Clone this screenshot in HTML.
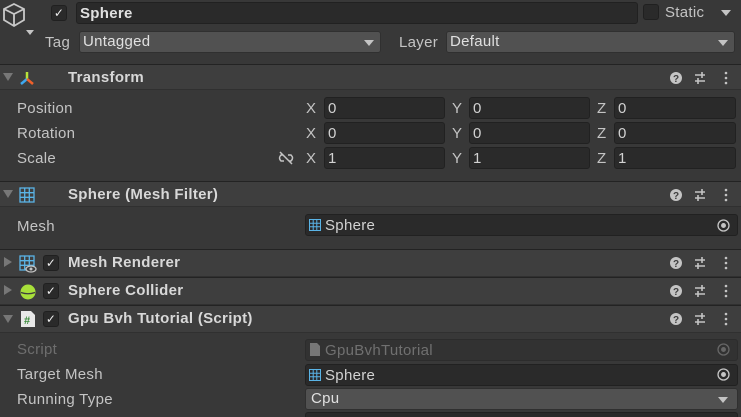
<!DOCTYPE html>
<html style="overflow:hidden;height:417px"><head><style>
*{box-sizing:border-box;margin:0;padding:0}
body{width:741px;height:417px;background:#383838;font-family:"Liberation Sans",sans-serif;font-size:15px;letter-spacing:0.3px;color:#c4c4c4;position:relative;overflow:hidden}
.a{position:absolute}
.f{position:absolute;background:#2a2a2a;border:1px solid #212121;border-radius:3px;height:22px;line-height:21px;padding-left:3px;color:#d2d2d2}
.dd{position:absolute;background:#515151;border:1px solid #303030;border-radius:3px;height:22px;line-height:20px;padding-left:3px;color:#e0e0e0}
.cb{position:absolute;width:16px;height:16px;background:#2a2a2a;border:1px solid #202020;border-radius:3px;color:#eee;font-size:12px;line-height:14px;text-align:center}
.hd{position:absolute;left:0;width:741px;height:26px;background:#3e3e3e;border-top:1px solid #232323;border-bottom:1px solid #303030}
.hd b{position:absolute;left:68px;top:4px;font-size:15px;color:#d8d8d8}
.tri{position:absolute;left:3px;top:8px;width:0;height:0;border-left:5px solid transparent;border-right:5px solid transparent;border-top:8px solid #777}
.tr{position:absolute;left:4px;top:7px;width:0;height:0;border-top:5px solid transparent;border-bottom:5px solid transparent;border-left:8px solid #777}
.ic{position:absolute;top:5px;right:0;width:80px;height:16px}
.lbl{position:absolute;left:17px}
.arr{position:absolute;width:0;height:0;border-left:5px solid transparent;border-right:5px solid transparent;border-top:6px solid #c4c4c4}
</style></head><body>
<svg class="a" style="left:2px;top:2px" width="26" height="28" viewBox="0 0 26 28" fill="none" stroke="#c8c8c8" stroke-width="1.8"><path d="M12 2 L22 7 L22 18 L12 24 L2 18 L2 7 Z M2 7 L12 12 L22 7 M12 12 L12 24"/></svg>
<div class="arr" style="left:26px;top:30px;border-top-color:#c4c4c4;border-left-width:4px;border-right-width:4px;border-top-width:5px"></div>
<div class="cb" style="left:51px;top:5px">✓</div>
<div class="f" style="left:76px;top:2px;width:562px;font-weight:bold;color:#e0e0e0">Sphere</div>
<div class="cb" style="left:643px;top:4px"></div>
<div class="a" style="left:665px;top:4px">Static</div>
<div class="arr" style="left:721px;top:10px"></div>
<div class="a" style="left:45px;top:34px">Tag</div>
<div class="dd" style="left:79px;top:31px;width:302px">Untagged</div>
<div class="arr" style="left:364px;top:40px"></div>
<div class="a" style="left:399px;top:34px">Layer</div>
<div class="dd" style="left:446px;top:31px;width:289px">Default</div>
<div class="arr" style="left:718px;top:40px"></div>

<div class="hd" style="top:64px"><div class="tri"></div>
<svg class="a" style="left:19px;top:5px" width="16" height="16"><line x1="8" y1="2" x2="8" y2="9" stroke="#b8e23a" stroke-width="2.5"/><line x1="8" y1="9" x2="2" y2="14" stroke="#3ea8f0" stroke-width="2.5"/><line x1="8" y1="9" x2="14" y2="14" stroke="#f0602a" stroke-width="2.5"/></svg>
<b>Transform</b>
<svg class="ic" viewBox="0 0 80 16"><circle cx="15" cy="8" r="6" fill="#c4c4c4"/><text x="12" y="12" font-size="10" font-weight="bold" fill="#3e3e3e" font-family="Liberation Sans">?</text><path d="M34 5h10M34 11h10M41 2v6M37 8v6" stroke="#c4c4c4" stroke-width="1.6"/><circle cx="65" cy="3" r="1.3" fill="#c4c4c4"/><circle cx="65" cy="8" r="1.3" fill="#c4c4c4"/><circle cx="65" cy="13" r="1.3" fill="#c4c4c4"/></svg></div>

<div class="lbl" style="top:100px">Position</div>
<div class="lbl" style="top:125px">Rotation</div>
<div class="lbl" style="top:150px">Scale</div>
<svg class="a" style="left:278px;top:151px" width="16" height="14" fill="none" stroke="#c4c4c4" stroke-width="1.5"><path d="M5 4 L3 4 Q0 7 3 10 L6 10 M10 4 L13 4 Q16 7 13 10 L11 10 M2 1 L14 13"/></svg>
<div class="a" style="left:306px;top:100px">X</div><div class="f" style="left:324px;top:97px;width:121px">0</div>
<div class="a" style="left:452px;top:100px">Y</div><div class="f" style="left:469px;top:97px;width:121px">0</div>
<div class="a" style="left:597px;top:100px">Z</div><div class="f" style="left:614px;top:97px;width:122px">0</div>
<div class="a" style="left:306px;top:125px">X</div><div class="f" style="left:324px;top:122px;width:121px">0</div>
<div class="a" style="left:452px;top:125px">Y</div><div class="f" style="left:469px;top:122px;width:121px">0</div>
<div class="a" style="left:597px;top:125px">Z</div><div class="f" style="left:614px;top:122px;width:122px">0</div>
<div class="a" style="left:306px;top:150px">X</div><div class="f" style="left:324px;top:147px;width:121px">1</div>
<div class="a" style="left:452px;top:150px">Y</div><div class="f" style="left:469px;top:147px;width:121px">1</div>
<div class="a" style="left:597px;top:150px">Z</div><div class="f" style="left:614px;top:147px;width:122px">1</div>

<div class="hd" style="top:181px"><div class="tri"></div>
<svg class="a" style="left:19px;top:5px" width="16" height="16" fill="none" stroke="#5ab4e6" stroke-width="1.3"><rect x="1" y="1" width="14" height="14"/><path d="M5.7 1v14M10.3 1v14M1 5.7h14M1 10.3h14"/></svg>
<b>Sphere (Mesh Filter)</b>
<svg class="ic" viewBox="0 0 80 16"><circle cx="15" cy="8" r="6" fill="#c4c4c4"/><text x="12" y="12" font-size="10" font-weight="bold" fill="#3e3e3e" font-family="Liberation Sans">?</text><path d="M34 5h10M34 11h10M41 2v6M37 8v6" stroke="#c4c4c4" stroke-width="1.6"/><circle cx="65" cy="3" r="1.3" fill="#c4c4c4"/><circle cx="65" cy="8" r="1.3" fill="#c4c4c4"/><circle cx="65" cy="13" r="1.3" fill="#c4c4c4"/></svg></div>
<div class="lbl" style="top:218px">Mesh</div>
<div class="f" style="left:305px;top:214px;width:433px;padding-left:19px">Sphere</div>
<svg class="a" style="left:309px;top:219px" width="12" height="12" fill="none" stroke="#5ab4e6" stroke-width="1"><rect x=".5" y=".5" width="11" height="11"/><path d="M4.2 .5v11M7.8 .5v11M.5 4.2h11M.5 7.8h11"/></svg>
<svg class="a" style="left:717px;top:219px" width="13" height="13" fill="none" stroke="#c4c4c4" stroke-width="1.3"><circle cx="6.5" cy="6.5" r="5.5"/><circle cx="6.5" cy="6.5" r="1.8" fill="#c4c4c4"/></svg>

<div class="hd" style="top:249px;height:28px"><div class="tr"></div>
<svg class="a" style="left:19px;top:5px" width="18" height="18" fill="none" stroke="#5ab4e6" stroke-width="1.3"><rect x="1" y="1" width="14" height="14"/><path d="M5.7 1v14M10.3 1v14M1 5.7h14M1 10.3h14"/><ellipse cx="12" cy="14" rx="5" ry="3" fill="#3e3e3e" stroke="#c4c4c4"/><circle cx="12" cy="14" r="1.5" fill="#c4c4c4" stroke="none"/></svg>
<div class="cb" style="left:43px;top:5px">✓</div><b>Mesh Renderer</b>
<svg class="ic" viewBox="0 0 80 16"><circle cx="15" cy="8" r="6" fill="#c4c4c4"/><text x="12" y="12" font-size="10" font-weight="bold" fill="#3e3e3e" font-family="Liberation Sans">?</text><path d="M34 5h10M34 11h10M41 2v6M37 8v6" stroke="#c4c4c4" stroke-width="1.6"/><circle cx="65" cy="3" r="1.3" fill="#c4c4c4"/><circle cx="65" cy="8" r="1.3" fill="#c4c4c4"/><circle cx="65" cy="13" r="1.3" fill="#c4c4c4"/></svg></div>

<div class="hd" style="top:277px;height:28px"><div class="tr"></div>
<svg class="a" style="left:20px;top:6px" width="16" height="16"><circle cx="8" cy="8" r="7.5" fill="#a8e03a"/><path d="M1 8.5 Q8 11 15 8.5" stroke="#3e3e3e" stroke-width="1.3" fill="none"/></svg>
<div class="cb" style="left:43px;top:5px">✓</div><b>Sphere Collider</b>
<svg class="ic" viewBox="0 0 80 16"><circle cx="15" cy="8" r="6" fill="#c4c4c4"/><text x="12" y="12" font-size="10" font-weight="bold" fill="#3e3e3e" font-family="Liberation Sans">?</text><path d="M34 5h10M34 11h10M41 2v6M37 8v6" stroke="#c4c4c4" stroke-width="1.6"/><circle cx="65" cy="3" r="1.3" fill="#c4c4c4"/><circle cx="65" cy="8" r="1.3" fill="#c4c4c4"/><circle cx="65" cy="13" r="1.3" fill="#c4c4c4"/></svg></div>

<div class="hd" style="top:305px;height:28px"><div class="tri" style="top:9px"></div>
<svg class="a" style="left:20px;top:4px" width="16" height="18"><path d="M1 1h10l4 4v12H1z" fill="#e8e8e8"/><text x="4" y="14" font-size="11" font-weight="bold" fill="#3a8a3a" font-family="Liberation Sans">#</text></svg>
<div class="cb" style="left:43px;top:5px">✓</div><b>Gpu Bvh Tutorial (Script)</b>
<svg class="ic" viewBox="0 0 80 16"><circle cx="15" cy="8" r="6" fill="#c4c4c4"/><text x="12" y="12" font-size="10" font-weight="bold" fill="#3e3e3e" font-family="Liberation Sans">?</text><path d="M34 5h10M34 11h10M41 2v6M37 8v6" stroke="#c4c4c4" stroke-width="1.6"/><circle cx="65" cy="3" r="1.3" fill="#c4c4c4"/><circle cx="65" cy="8" r="1.3" fill="#c4c4c4"/><circle cx="65" cy="13" r="1.3" fill="#c4c4c4"/></svg></div>

<div class="lbl" style="top:341px;color:#6e6e6e">Script</div>
<div class="f" style="left:305px;top:339px;width:433px;padding-left:19px;background:#323232;border-color:#2c2c2c;color:#707070">GpuBvhTutorial</div>
<svg class="a" style="left:310px;top:343px" width="10" height="13"><path d="M0 0h7l3 3v10H0z" fill="#777"/></svg>
<svg class="a" style="left:717px;top:343px" width="13" height="13" fill="none" stroke="#666" stroke-width="1.3"><circle cx="6.5" cy="6.5" r="5.5"/><circle cx="6.5" cy="6.5" r="1.8" fill="#666"/></svg>
<div class="lbl" style="top:366px">Target Mesh</div>
<div class="f" style="left:305px;top:364px;width:433px;padding-left:19px">Sphere</div>
<svg class="a" style="left:309px;top:369px" width="12" height="12" fill="none" stroke="#5ab4e6" stroke-width="1"><rect x=".5" y=".5" width="11" height="11"/><path d="M4.2 .5v11M7.8 .5v11M.5 4.2h11M.5 7.8h11"/></svg>
<svg class="a" style="left:717px;top:368px" width="13" height="13" fill="none" stroke="#c4c4c4" stroke-width="1.3"><circle cx="6.5" cy="6.5" r="5.5"/><circle cx="6.5" cy="6.5" r="1.8" fill="#c4c4c4"/></svg>
<div class="lbl" style="top:391px">Running Type</div>
<div class="dd" style="left:305px;top:388px;width:433px;padding-left:5px">Cpu</div>
<div class="arr" style="left:718px;top:397px"></div>
<div class="f" style="left:305px;top:412px;width:433px;height:5px;border-bottom:none;border-radius:3px 3px 0 0"></div>
</body></html>
